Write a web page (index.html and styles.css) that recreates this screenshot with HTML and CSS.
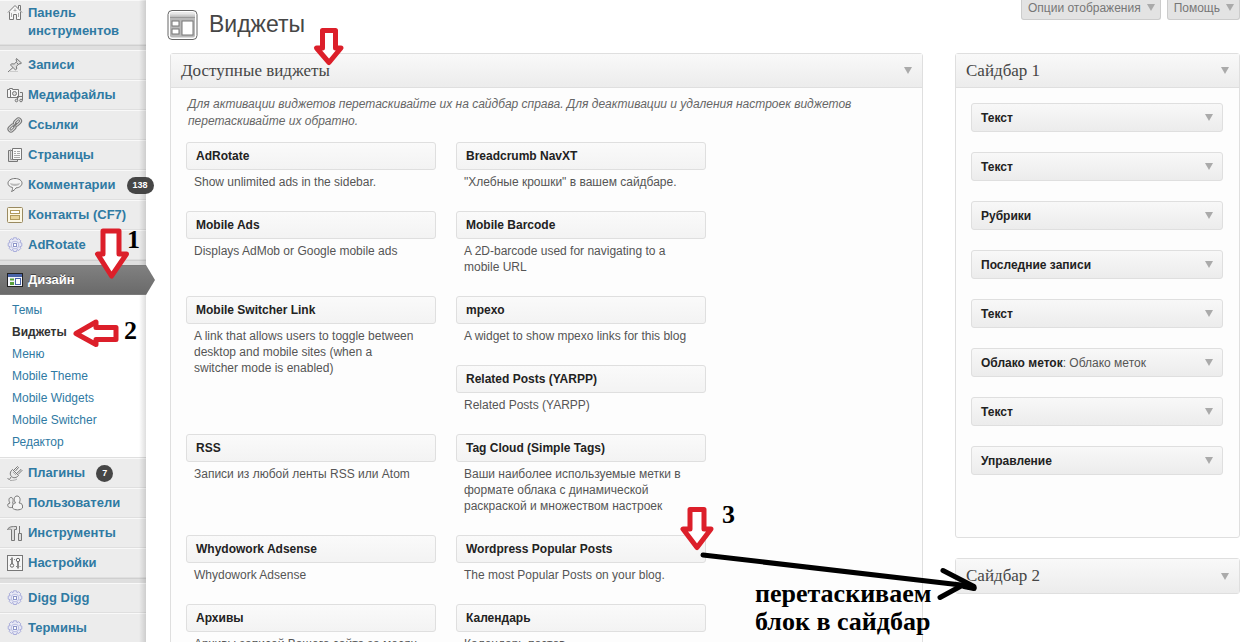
FILE: index.html
```html
<!DOCTYPE html>
<html lang="ru">
<head>
<meta charset="utf-8">
<title>Виджеты</title>
<link rel="stylesheet" href="styles.css">
</head>
<body>
<svg class="defs" aria-hidden="true">
  <defs>
    <linearGradient id="metal" x1="0" y1="0" x2="0" y2="1"><stop offset="0" stop-color="#f4f4f4"/><stop offset="1" stop-color="#b5b5b5"/></linearGradient>
    <symbol id="gear" viewBox="0 0 16 16">
      <path d="M6.500 .8h3l.5 1.900 1.700-1 2.100 2.100-1 1.700 2 .6v3l-2 .6 1 1.700-2.100 2.100-1.700-1-.5 2h-3l-.5-2-1.700 1-2.100-2.100 1-1.700-2-.6v-3l2-.6-1-1.700 2.100-2.100 1.700 1z" fill="#e8e9f5" stroke="#a9addb"/>
      <circle cx="8" cy="8" r="3.800" fill="#eef0f9" stroke="#b9bce2"/>
      <rect x="6.500" y="6.500" width="3" height="3" fill="#fff" stroke="#8e96c8"/>
    </symbol>
  </defs>
</svg>
<div class="page">
  <nav class="menu" aria-label="Меню администратора">
    <ul class="menu-list">
      <li><a class="item item-first" href="#"><svg class="ico" viewBox="0 0 16 16"><path d="M2.500 8v7.500h4v-5h3v5h4V8M1 8.500L8 1.500l7 7M11.500 4.500v-3h2v5" fill="#f8f8f8" stroke="#777"/><path d="M4.500 9v4M11.500 9v4M8 4.500v3M6.500 6.500h3" stroke="#aaa"/></svg><span>Панель инструментов</span></a></li>
      <li class="sep"></li>
      <li><a class="item" href="#"><svg class="ico" viewBox="0 0 16 16"><path d="M9.500 1.500l5 4.500-1.500 1-1-.3-2.500 2.600.2 2.700-1.200 1L3.500 8l1-1.200 2.700.2L10 4.300l-1-1.300z" fill="#ddd" stroke="#777"/><path d="M6 10.500L1 15M9.500 5.500l2 2" stroke="#777"/><path d="M3 14.500h8" stroke="#ccc"/></svg>Записи</a></li>
      <li><a class="item" href="#"><svg class="ico" viewBox="0 0 16 16"><path d="M.5 2.500h2v-1h3v1h6v8H.5zM3.500 3v7" fill="#f6f6f6" stroke="#777"/><circle cx="7.500" cy="6.500" r="2" fill="#ddd" stroke="#777"/><path d="M13 5.500h2.500v8M10.500 9v4.500M10.500 9.500h5" stroke="#777" fill="none"/><circle cx="9.500" cy="13.500" r="1.300" fill="#ddd" stroke="#777"/><circle cx="14" cy="13.500" r="1.300" fill="#ddd" stroke="#777"/></svg>Медиафайлы</a></li>
      <li><a class="item" href="#"><svg class="ico" viewBox="0 0 16 16"><g fill="none" stroke="#777" stroke-width="3"><rect x="8.500" y="1.500" width="4" height="7" rx="2" transform="rotate(45 10.500 5)"/><rect x="3" y="7.500" width="4" height="7" rx="2" transform="rotate(45 5 11)"/></g><g fill="none" stroke="#e4e4e4" stroke-width="1"><rect x="8.500" y="1.500" width="4" height="7" rx="2" transform="rotate(45 10.500 5)"/><rect x="3" y="7.500" width="4" height="7" rx="2" transform="rotate(45 5 11)"/></g><path d="M6 10l4-4" stroke="#777" stroke-width="1.500"/></svg>Ссылки</a></li>
      <li><a class="item" href="#"><svg class="ico" viewBox="0 0 16 16"><path d="M5 3.500H1.500v11h9V13" fill="#ddd" stroke="#777"/><path d="M3.500 2.500v10h3" fill="none" stroke="#999"/><path d="M5.500 1.500h9v11h-9z" fill="#fafafa" stroke="#777"/><path d="M7 4.500h2M7 6.500h2M7 8.500h6M7 10.500h6M10 4.500h3M10 6.500h3" stroke="#aaa"/></svg>Страницы</a></li>
      <li><a class="item" href="#"><svg class="ico" viewBox="0 0 16 16"><path d="M8 1.500c4 0 7 2 7 4.700s-3 4.600-6 4.700c-1 1.600-2.500 3-4.500 3.600.8-1.200 1.200-2.600 1-4C2.700 9.900 1 8.300 1 6.200c0-2.700 3-4.700 7-4.700z" fill="#f4f4f4" stroke="#777"/><path d="M3 6c0 4 10 4 10 0-2 1-8 1-10 0z" fill="#bbb"/></svg>Комментарии<span class="badge">138</span></a></li>
      <li><a class="item" href="#"><svg class="ico" viewBox="0 0 16 16"><rect x=".5" y=".5" width="15" height="15" rx="1" fill="#fdf8e6" stroke="#9a8a60"/><rect x="3.500" y="3.500" width="9" height="3" fill="#fff" stroke="#b09a5c"/><rect x="3.500" y="8.500" width="9" height="4" fill="#e7d49c" stroke="#b09a5c"/></svg>Контакты (CF7)</a></li>
      <li><a class="item" href="#"><svg class="ico"><use href="#gear"/></svg>AdRotate</a></li>
      <li class="sep"></li>
      <li class="current"><a class="item" href="#"><svg class="ico" viewBox="0 0 16 16"><rect x=".5" y="1.500" width="15" height="13" fill="#f4f6fb" stroke="#222"/><path d="M1 3.500h14" stroke="#4964a8" stroke-width="3"/><path d="M3 6.500h4v2H3zM3 10h4v3H3z" fill="#58a03c"/><rect x="8.500" y="6.500" width="5" height="6" fill="#fff" stroke="#4964a8"/></svg>Дизайн</a></li>
      <li>
        <ul class="submenu">
          <li><a href="#">Темы</a></li>
          <li><a class="active" href="#">Виджеты</a></li>
          <li><a href="#">Меню</a></li>
          <li><a href="#">Mobile Theme</a></li>
          <li><a href="#">Mobile Widgets</a></li>
          <li><a href="#">Mobile Switcher</a></li>
          <li><a href="#">Редактор</a></li>
        </ul>
      </li>
      <li><a class="item" href="#"><svg class="ico" viewBox="0 0 16 16"><path d="M5.500 4.500l6 6c-2 2.500-5 3-7 1-2-2-1.500-5 1-7z" fill="#e8e8e8" stroke="#777"/><path d="M7 5l3.500-3.500 1 1L8.500 6M10 8l4-3.500 1 1L11 9.500M4 12l-1.500 2.500-2-1" fill="#eee" stroke="#777"/><path d="M6 7l3 3M3 15.500c3 0 6-.5 7-1.500" stroke="#aaa" fill="none"/></svg>Плагины<span class="badge">7</span></a></li>
      <li><a class="item" href="#"><svg class="ico" viewBox="0 0 16 16"><path d="M3 8C1.500 6 1.500 2.500 4 2.500S6.500 6 5.500 8c1 1 1.500 4-1 4.500-3 .5-4.500-1.500-3.500-3.500z" fill="#eee" stroke="#777"/><path d="M8.500 8C6.500 5 7 1 10 1s4 4 2 7c3 0 4 2 3.500 5-2 2.500-8 2.500-10 0-.5-3 1-5 3-5z" fill="#f4f4f4" stroke="#777"/></svg>Пользователи</a></li>
      <li><a class="item" href="#"><svg class="ico" viewBox="0 0 16 16"><path d="M.5 4.500C2 1.500 5 1.500 9.500 1.500v3h-2v11h-3v-11c-1.500-.5-2.500-.5-4 0z" fill="#ddd" stroke="#777"/><path d="M12.500 1v7M11.500 8.500h3v7h-3z" fill="#ddd" stroke="#777"/></svg>Инструменты</a></li>
      <li><a class="item" href="#"><svg class="ico" viewBox="0 0 16 16"><rect x=".5" y=".5" width="15" height="15" fill="#f6f6f6" stroke="#777"/><path d="M5 2.500v7M11 6v7.500" stroke="#666" stroke-width="1.500"/><circle cx="5" cy="10.500" r="1.700" fill="#fff" stroke="#666"/><circle cx="11" cy="5" r="1.700" fill="#fff" stroke="#666"/><path d="M3 4.500h1M7 4.500h1M9 11.500h1M12.500 11.500h1" stroke="#888"/></svg>Настройки</a></li>
      <li class="sep"></li>
      <li><a class="item" href="#"><svg class="ico"><use href="#gear"/></svg>Digg Digg</a></li>
      <li><a class="item" href="#"><svg class="ico"><use href="#gear"/></svg>Термины</a></li>
    </ul>
  </nav>

  <main class="content">
    <header class="top">
      <svg class="title-ico" viewBox="0 0 32 32"><rect x="1" y="1.500" width="29" height="29" rx="4" fill="#fff" stroke="#666"/><rect x="3" y="3.500" width="25" height="25" rx="2" fill="#b9b9b9"/><rect x="3" y="3.500" width="25" height="5" fill="url(#metal)"/><path d="M3 8.500h25" stroke="#999"/><rect x="5" y="12" width="7" height="5" fill="#fff" stroke="#777"/><rect x="5" y="20" width="7" height="5" fill="#fff" stroke="#777"/><rect x="15" y="12" width="11" height="14" fill="#fff" stroke="#777"/></svg>
      <h1>Виджеты</h1>
      <div class="screen-tabs">
        <button class="tab" type="button">Опции отображения<span class="tri"></span></button>
        <button class="tab" type="button">Помощь<span class="tri"></span></button>
      </div>
    </header>

    <div class="columns">
      <section class="panel available">
        <div class="panel-head"><h2>Доступные виджеты</h2><button class="toggle" type="button" aria-label="Свернуть"><span class="tri"></span></button></div>
        <div class="panel-body">
          <p class="hint">Для активации виджетов перетаскивайте их на сайдбар справа. Для деактивации и удаления настроек виджетов перетаскивайте их обратно.</p>
          <div class="widgets">
            <article><h3>AdRotate</h3><p>Show unlimited ads in the sidebar.</p></article>
            <article><h3>Breadcrumb NavXT</h3><p>"Хлебные крошки" в вашем сайдбаре.</p></article>
            <article><h3>Mobile Ads</h3><p>Displays AdMob or Google mobile ads</p></article>
            <article><h3>Mobile Barcode</h3><p>A 2D-barcode used for navigating to a mobile URL</p></article>
            <article class="tall"><h3>Mobile Switcher Link</h3><p>A link that allows users to toggle between desktop and mobile sites (when a switcher mode is enabled)</p></article>
            <article><h3>mpexo</h3><p>A widget to show mpexo links for this blog</p></article>
            <article><h3>Related Posts (YARPP)</h3><p>Related Posts (YARPP)</p></article>
            <article><h3>RSS</h3><p>Записи из любой ленты RSS или Atom</p></article>
            <article><h3>Tag Cloud (Simple Tags)</h3><p>Ваши наиболее используемые метки в формате облака с динамической раскраской и множеством настроек</p></article>
            <article><h3>Whydowork Adsense</h3><p>Whydowork Adsense</p></article>
            <article><h3>Wordpress Popular Posts</h3><p>The most Popular Posts on your blog.</p></article>
            <article><h3>Архивы</h3><p>Архивы записей Вашего сайта за месяц</p></article>
            <article><h3>Календарь</h3><p>Календарь постов</p></article>
          </div>
        </div>
      </section>

      <div class="sidebars">
        <section class="panel">
          <div class="panel-head"><h2>Сайдбар 1</h2><button class="toggle" type="button" aria-label="Свернуть"><span class="tri"></span></button></div>
          <ul class="placed">
            <li><b>Текст</b><button class="toggle" type="button" aria-label="Открыть"><span class="tri"></span></button></li>
            <li><b>Текст</b><button class="toggle" type="button" aria-label="Открыть"><span class="tri"></span></button></li>
            <li><b>Рубрики</b><button class="toggle" type="button" aria-label="Открыть"><span class="tri"></span></button></li>
            <li><b>Последние записи</b><button class="toggle" type="button" aria-label="Открыть"><span class="tri"></span></button></li>
            <li><b>Текст</b><button class="toggle" type="button" aria-label="Открыть"><span class="tri"></span></button></li>
            <li><b>Облако меток<span class="sub">: Облако меток</span></b><button class="toggle" type="button" aria-label="Открыть"><span class="tri"></span></button></li>
            <li><b>Текст</b><button class="toggle" type="button" aria-label="Открыть"><span class="tri"></span></button></li>
            <li><b>Управление</b><button class="toggle" type="button" aria-label="Открыть"><span class="tri"></span></button></li>
          </ul>
        </section>
        <section class="panel closed">
          <div class="panel-head"><h2>Сайдбар 2</h2><button class="toggle" type="button" aria-label="Развернуть"><span class="tri"></span></button></div>
        </section>
      </div>
    </div>
  </main>

  <svg class="marks" aria-hidden="true">
    <g fill="#fff" stroke="#dc1f2a" stroke-width="5" stroke-linejoin="round">
      <path d="M322.500 30.500h13V48h5.500L329 62.500 316.500 48h6z"/>
      <path d="M103 231h16v23h7.500L111.500 276 97.500 254H103z"/>
      <path d="M116 327.500v12H96v5L76 333.500 96 322v5.500z"/>
      <path d="M690 509.500h14V529h7L697 547.500 683 529h7z"/>
    </g>
    <g fill="none" stroke="#000" stroke-width="5" stroke-linecap="round" stroke-linejoin="round">
      <path d="M703 555l258 30 13 3"/>
      <path d="M943 570.500l31 16v2l-10-2"/>
      <path d="M940 597.500l22-12"/>
    </g>
  </svg>
  <span class="note n1">1</span>
  <span class="note n2">2</span>
  <span class="note n3">3</span>
  <p class="note n4">перетаскиваем<br>блок в сайдбар</p>
</div>
</body>
</html>
```

FILE: styles.css
```css
* { box-sizing: border-box; }
html { height: 100%; overflow: hidden; }
body {
  margin: 0;
  height: 100%;
  background: #fff;
  color: #333;
  font: 12px/16px "Liberation Sans", Arial, sans-serif;
}
h1, h2, h3, p, ul { margin: 0; padding: 0; font-weight: normal; }
ul { list-style: none; }
button { font: inherit; color: inherit; background: none; border: 0; padding: 0; cursor: pointer; }
.defs { position: absolute; width: 0; height: 0; }

.page {
  position: relative;
  display: flex;
  height: calc(100vh - 2px);
  overflow: hidden;
}

/* admin menu */
.menu {
  flex: none;
  width: 146px;
  background: #ececec;
}
.menu-list { position: relative; }
.menu-list::after {
  content: "";
  position: absolute;
  inset: 0 0 0 auto;
  width: 7px;
  background: linear-gradient(to right, rgba(0, 0, 0, 0), rgba(0, 0, 0, .13));
  pointer-events: none;
}
.item {
  display: flex;
  align-items: center;
  gap: 5px;
  height: 30px;
  padding-left: 7px;
  border-top: 1px solid #f9f9f9;
  border-bottom: 1px solid #dfdfdf;
  color: #2f7aa3;
  font-size: 13px;
  line-height: 18px;
  font-weight: bold;
  text-decoration: none;
}
.item-first {
  align-items: flex-start;
  height: auto;
  padding: 3px 10px 4px 7px;
}
.ico { flex: none; width: 16px; height: 16px; }
.sep {
  height: 5px;
  background: #dfdfdf;
  border-top: 1px solid #cfcfcf;
}
.badge {
  position: relative;
  z-index: 2;
  margin-left: 6px;
  padding: 0 6px;
  border-radius: 9px;
  background: #464646;
  color: #fff;
  font-size: 9px;
  line-height: 17px;
}
.current { position: relative; z-index: 1; }
.current .item {
  background: linear-gradient(#808080, #6a6a6a);
  border-color: #7a7a7a #6d6d6d;
  color: #fff;
  text-shadow: 0 -1px 0 #444;
}
.current::after {
  content: "";
  position: absolute;
  top: 0;
  left: 100%;
  width: 9px;
  height: 30px;
  background: linear-gradient(#808080, #6a6a6a);
  clip-path: polygon(0 0, 100% 50%, 0 100%);
}
.submenu { padding: 4px 0; background: #fff; border-bottom: 1px solid #dfdfdf; }
.submenu a {
  display: block;
  padding-left: 12px;
  line-height: 22px;
  color: #2f7aa3;
  text-decoration: none;
}
.submenu .active { color: #333; font-weight: bold; }

/* heading row */
.content { flex: 1; min-width: 0; padding: 0 9px 0 21px; }
.top { display: flex; height: 53px; align-items: flex-start; }
.title-ico { width: 32px; height: 32px; margin: 9px 10px 0 0; }
h1 {
  flex: 1;
  padding-top: 8px;
  color: #464646;
  font-size: 23px;
  line-height: 32px;
}
.screen-tabs { display: flex; gap: 6px; }
.tab {
  display: flex;
  align-items: center;
  gap: 6px;
  height: 20px;
  padding: 0 5px 4px 6px;
  border: 1px solid #ccc;
  border-top: 0;
  border-radius: 0 0 3px 3px;
  background: #e3e3e3;
  color: #777;
}
.tri {
  display: block;
  border: 4px solid transparent;
  border-top: 7px solid #aaa;
  border-bottom: 0;
}

/* panels */
.columns { display: flex; align-items: flex-start; gap: 32px; padding-left: 3px; }
.available { flex: 1; min-width: 0; }
.sidebars { flex: none; width: 285px; display: grid; gap: 20px; }
.panel { border: 1px solid #dfdfdf; border-radius: 3px; background: #fdfdfd; }
.panel-head {
  display: flex;
  align-items: center;
  justify-content: space-between;
  height: 34px;
  padding: 0 10px;
  border-bottom: 1px solid #dfdfdf;
  background: linear-gradient(#f9f9f9, #ececec);
}
.closed .panel-head { border-bottom: 0; }
h2 {
  color: #464646;
  font-family: "Liberation Serif", Georgia, serif;
  font-size: 17px;
  line-height: 20px;
}
.panel-body { padding: 8px 15px 0; }
.hint { padding: 0 30px 0 2px; color: #666; font-style: italic; line-height: 17px; }
.widgets {
  display: grid;
  grid-template-columns: repeat(2, 250px);
  column-gap: 20px;
  padding-top: 12px;
}
.tall { grid-row: span 2; }
article { padding-bottom: 21px; }
h3 {
  height: 28px;
  padding: 0 9px;
  border: 1px solid #dfdfdf;
  border-radius: 3px;
  background: linear-gradient(#fafafa, #f3f3f3);
  color: #222;
  font-size: 12px;
  line-height: 26px;
  font-weight: bold;
}
article p { padding: 4px 18px 0 8px; color: #555; }

.placed { display: grid; gap: 20px; padding: 15px 16px 62px 15px; }
.placed li {
  display: flex;
  align-items: center;
  justify-content: space-between;
  height: 29px;
  padding: 0 9px;
  border: 1px solid #dfdfdf;
  border-radius: 3px;
  background: linear-gradient(#f8f8f8, #ececec);
  color: #222;
}
.sub { color: #555; font-weight: normal; }

/* tutorial marks drawn over the screen */
.marks { position: absolute; z-index: 3; inset: 0; width: 100%; height: 100%; pointer-events: none; }
.note {
  position: absolute;
  z-index: 3;
  color: #000;
  font-family: "Liberation Serif", "Times New Roman", serif;
  font-size: 26px;
  line-height: 28px;
  font-weight: bold;
}
.n1 { left: 127px; top: 226px; }
.n2 { left: 124px; top: 317px; }
.n3 { left: 722px; top: 501px; }
.n4 { left: 755px; top: 580px; }
```
